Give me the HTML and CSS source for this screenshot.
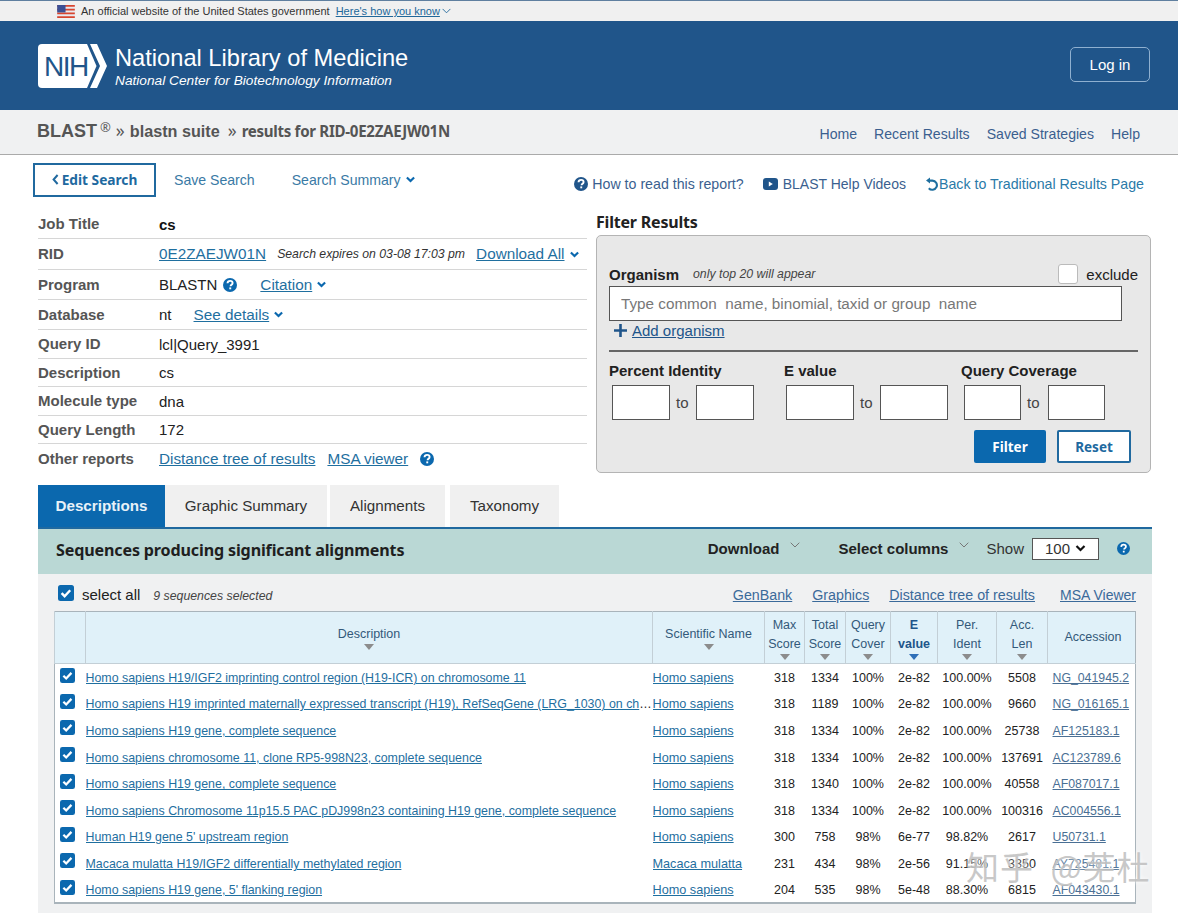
FILE: index.html
```html
<!DOCTYPE html>
<html lang="en">
<head>
<meta charset="utf-8">
<title>NCBI Blast</title>
<link rel="stylesheet" href="styles.css">
</head>
<body>
<svg class="defs" width="0" height="0" aria-hidden="true">
  <symbol id="help" viewBox="0 0 14 14"><circle cx="7" cy="7" r="7" fill="currentColor"/><path d="M4.5 5.3C4.6 3.7 5.7 2.9 7.1 2.9c1.5 0 2.5.9 2.5 2.1 0 1.1-.7 1.5-1.3 1.9-.5.3-.7.7-.7 1.3" fill="none" stroke="#fff" stroke-width="1.9"/><rect x="6.3" y="9.4" width="1.9" height="1.9" fill="#fff"/></symbol>
  <symbol id="chev" viewBox="0 0 10 7"><path d="M1 1.2l4 4 4-4" fill="none" stroke="currentColor" stroke-width="2.4"/></symbol>
  <symbol id="thin" viewBox="0 0 10 6"><path d="M.7.7L5 5 9.3.7" fill="none" stroke="currentColor" stroke-width="1"/></symbol>
  <symbol id="check" viewBox="0 0 16 16"><rect width="16" height="16" rx="2.5" fill="#0b68ae"/><path d="M3.6 8.2l3 3 5.6-6" fill="none" stroke="#fff" stroke-width="2.4"/></symbol>
  <symbol id="sort" viewBox="0 0 10 6"><path d="M0 0h10L5 6z" fill="currentColor"/></symbol>
</svg>

<div class="gov">
  <svg class="flag" viewBox="0 0 19 14" aria-hidden="true"><rect width="19" height="14" fill="#e9e9ef"/><path d="M0 0h19v2H0zM0 4h19v2H0zM0 8h19v2H0zM0 12h19v2H0z" fill="#d8452f"/><rect width="9" height="8" fill="#3c4f94"/></svg>
  <span>An official website of the United States government</span>
  <a class="gov-link" href="#">Here's how you know</a>
  <svg class="gov-chev"><use href="#thin"/></svg>
</div>

<header class="masthead">
  <div class="brand">
    <svg class="nih" viewBox="0 0 69 44" aria-hidden="true">
      <path d="M4 0H49L58.500 22 49 44H4a4 4 0 0 1-4-4V4a4 4 0 0 1 4-4z" fill="#fff"/>
      <path d="M52 0h7l10 22-10 22h-7l10-22z" fill="#fff"/>
      <text x="6" y="32" class="nih-text">NIH</text>
    </svg>
    <div class="brand-text">
      <div class="brand-main">National Library of Medicine</div>
      <div class="brand-sub">National Center for Biotechnology Information</div>
    </div>
  </div>
  <a class="login" href="#">Log in</a>
</header>

<nav class="crumbs">
  <div class="crumb-path"><b class="c1">BLAST</b><sup class="reg">®</sup><span class="raquo">»</span><b class="c2">blastn suite</b><span class="raquo">»</span><b class="c3">results for RID-0E2ZAEJW01N</b></div>
  <div class="crumb-links"><a href="#">Home</a><a href="#">Recent Results</a><a href="#">Saved Strategies</a><a href="#">Help</a></div>
</nav>

<div class="toolbar">
  <div class="tool-left">
    <a class="edit" href="#"><svg class="edit-chev" viewBox="0 0 7 11"><path d="M5.6 1L1.6 5.500l4 4.500" fill="none" stroke="currentColor" stroke-width="2"/></svg>Edit Search</a>
    <a class="tool-a" href="#">Save Search</a>
    <a class="tool-b" href="#">Search Summary<svg class="chev"><use href="#chev"/></svg></a>
  </div>
  <div class="tool-right">
    <a href="#" class="tr1"><svg class="help"><use href="#help"/></svg>How to read this report?</a>
    <a href="#" class="tr2"><svg class="yt" viewBox="0 0 15 12"><rect width="15" height="12" rx="3" fill="#20558a"/><path d="M5.8 3.400l4 2.600-4 2.600z" fill="#fff"/></svg>BLAST Help Videos</a>
    <a href="#" class="tr3"><svg class="undo" viewBox="0 0 14 14"><path d="M3.400 3.600h4a4.600 4.600 0 1 1-3.600 7.600" fill="none" stroke="#1f6f9f" stroke-width="2.100"/><path d="M1 3.600L5 .6v6z" fill="#1f6f9f"/></svg>Back to Traditional Results Page</a>
  </div>
</div>

<div class="summary">
  <dl class="job">
    <div class="job-row h29"><dt>Job Title</dt><dd class="strong">cs</dd></div>
    <div class="job-row h31"><dt>RID</dt><dd><a href="#">0E2ZAEJW01N</a><em class="exp">Search expires on 03-08 17:03 pm</em><a href="#">Download All</a><svg class="chev"><use href="#chev"/></svg></dd></div>
    <div class="job-row h30"><dt>Program</dt><dd>BLASTN<svg class="help after"><use href="#help"/></svg><a class="cit" href="#">Citation</a><svg class="chev"><use href="#chev"/></svg></dd></div>
    <div class="job-row h30"><dt>Database</dt><dd>nt<a class="see" href="#">See details</a><svg class="chev"><use href="#chev"/></svg></dd></div>
    <div class="job-row h29"><dt>Query ID</dt><dd>lcl|Query_3991</dd></div>
    <div class="job-row h28"><dt>Description</dt><dd>cs</dd></div>
    <div class="job-row h29"><dt>Molecule type</dt><dd>dna</dd></div>
    <div class="job-row h28"><dt>Query Length</dt><dd>172</dd></div>
    <div class="job-row h29 last"><dt>Other reports</dt><dd><a href="#">Distance tree of results</a><a class="msa" href="#">MSA viewer</a><svg class="help msa-h"><use href="#help"/></svg></dd></div>
  </dl>

  <section class="filter">
    <h2>Filter Results</h2>
    <div class="filter-box">
      <div class="org-head">
        <label class="org-label">Organism</label>
        <em class="org-note">only top 20 will appear</em>
        <span class="excl"><span class="excl-box"></span>exclude</span>
      </div>
      <input class="org-input" type="text" placeholder="Type common  name, binomial, taxid or group  name">
      <div class="add"><svg class="plus" viewBox="0 0 13 13"><path d="M6.500 0v13M0 6.500h13" stroke="#20558a" stroke-width="2.600"/></svg><a href="#">Add organism</a></div>
      <div class="ranges">
        <div class="range r1"><label>Percent Identity</label><div class="pair"><input class="w58"><span>to</span><input class="w58"></div></div>
        <div class="range r2"><label>E value</label><div class="pair"><input class="w68"><span>to</span><input class="w68"></div></div>
        <div class="range r3"><label>Query Coverage</label><div class="pair"><input class="w57"><span>to</span><input class="w57"></div></div>
      </div>
      <div class="actions"><button class="btn-filter">Filter</button><button class="btn-reset">Reset</button></div>
    </div>
  </section>
</div>

<div class="tabs">
  <a class="tab active t1" href="#">Descriptions</a>
  <a class="tab t2" href="#">Graphic Summary</a>
  <a class="tab t3" href="#">Alignments</a>
  <a class="tab t4" href="#">Taxonomy</a>
</div>

<section class="results">
  <div class="res-bar">
    <h3>Sequences producing significant alignments</h3>
    <div class="res-ctl">
      <b class="dl">Download</b><svg class="thin"><use href="#thin"/></svg>
      <b class="sel">Select columns</b><svg class="thin"><use href="#thin"/></svg>
      <span class="show">Show</span>
      <span class="select">100<svg class="sel-chev" viewBox="0 0 10 7"><path d="M1 1l4 4 4-4" fill="none" stroke="#111" stroke-width="2.200"/></svg></span>
      <svg class="help bar-h"><use href="#help"/></svg>
    </div>
  </div>
  <div class="res-tools">
    <div class="sel-all"><svg class="cb big"><use href="#check"/></svg><span class="sa">select all</span><em>9 sequences selected</em></div>
    <div class="res-links"><a href="#">GenBank</a><a href="#">Graphics</a><a href="#">Distance tree of results</a><a class="msa-link" href="#">MSA Viewer</a></div>
  </div>

  <table class="hits">
    <colgroup><col class="c-cb"><col class="c-desc"><col class="c-sci"><col class="c-max"><col class="c-tot"><col class="c-cov"><col class="c-e"><col class="c-per"><col class="c-len"><col class="c-acc"></colgroup>
    <thead>
      <tr>
        <th></th>
        <th>Description<svg class="sort"><use href="#sort"/></svg></th>
        <th>Scientific Name<svg class="sort"><use href="#sort"/></svg></th>
        <th>Max Score<svg class="sort"><use href="#sort"/></svg></th>
        <th>Total Score<svg class="sort"><use href="#sort"/></svg></th>
        <th>Query Cover<svg class="sort"><use href="#sort"/></svg></th>
        <th class="on">E value<svg class="sort"><use href="#sort"/></svg></th>
        <th>Per.<br>Ident<svg class="sort"><use href="#sort"/></svg></th>
        <th>Acc. Len<svg class="sort"><use href="#sort"/></svg></th>
        <th class="acc-h">Accession</th>
      </tr>
    </thead>
    <tbody>
      <tr><td><svg class="cb"><use href="#check"/></svg></td><td class="d"><a href="#">Homo sapiens H19/IGF2 imprinting control region (H19-ICR) on chromosome 11</a></td><td class="s"><a href="#">Homo sapiens</a></td><td>318</td><td>1334</td><td>100%</td><td>2e-82</td><td>100.00%</td><td>5508</td><td class="a"><a href="#">NG_041945.2</a></td></tr>
      <tr><td><svg class="cb"><use href="#check"/></svg></td><td class="d"><a href="#">Homo sapiens H19 imprinted maternally expressed transcript (H19), RefSeqGene (LRG_1030) on chromosome 11</a></td><td class="s"><a href="#">Homo sapiens</a></td><td>318</td><td>1189</td><td>100%</td><td>2e-82</td><td>100.00%</td><td>9660</td><td class="a"><a href="#">NG_016165.1</a></td></tr>
      <tr><td><svg class="cb"><use href="#check"/></svg></td><td class="d"><a href="#">Homo sapiens H19 gene, complete sequence</a></td><td class="s"><a href="#">Homo sapiens</a></td><td>318</td><td>1334</td><td>100%</td><td>2e-82</td><td>100.00%</td><td>25738</td><td class="a"><a href="#">AF125183.1</a></td></tr>
      <tr><td><svg class="cb"><use href="#check"/></svg></td><td class="d"><a href="#">Homo sapiens chromosome 11, clone RP5-998N23, complete sequence</a></td><td class="s"><a href="#">Homo sapiens</a></td><td>318</td><td>1334</td><td>100%</td><td>2e-82</td><td>100.00%</td><td>137691</td><td class="a"><a href="#">AC123789.6</a></td></tr>
      <tr><td><svg class="cb"><use href="#check"/></svg></td><td class="d"><a href="#">Homo sapiens H19 gene, complete sequence</a></td><td class="s"><a href="#">Homo sapiens</a></td><td>318</td><td>1340</td><td>100%</td><td>2e-82</td><td>100.00%</td><td>40558</td><td class="a"><a href="#">AF087017.1</a></td></tr>
      <tr><td><svg class="cb"><use href="#check"/></svg></td><td class="d"><a href="#">Homo sapiens Chromosome 11p15.5 PAC pDJ998n23 containing H19 gene, complete sequence</a></td><td class="s"><a href="#">Homo sapiens</a></td><td>318</td><td>1334</td><td>100%</td><td>2e-82</td><td>100.00%</td><td>100316</td><td class="a"><a href="#">AC004556.1</a></td></tr>
      <tr><td><svg class="cb"><use href="#check"/></svg></td><td class="d"><a href="#">Human H19 gene 5' upstream region</a></td><td class="s"><a href="#">Homo sapiens</a></td><td>300</td><td>758</td><td>98%</td><td>6e-77</td><td>98.82%</td><td>2617</td><td class="a"><a href="#">U50731.1</a></td></tr>
      <tr><td><svg class="cb"><use href="#check"/></svg></td><td class="d"><a href="#">Macaca mulatta H19/IGF2 differentially methylated region</a></td><td class="s"><a href="#">Macaca mulatta</a></td><td>231</td><td>434</td><td>98%</td><td>2e-56</td><td>91.15%</td><td>3350</td><td class="a"><a href="#">AY725481.1</a></td></tr>
      <tr><td><svg class="cb"><use href="#check"/></svg></td><td class="d"><a href="#">Homo sapiens H19 gene, 5' flanking region</a></td><td class="s"><a href="#">Homo sapiens</a></td><td>204</td><td>535</td><td>98%</td><td>5e-48</td><td>88.30%</td><td>6815</td><td class="a"><a href="#">AF043430.1</a></td></tr>
    </tbody>
  </table>
</section>

<div class="watermark">知乎 @芜杜</div>
</body>
</html>
```
FILE: styles.css
```css
* { box-sizing: border-box; }
html, body { margin: 0; padding: 0; }
body { width: 1178px; height: 913px; overflow: hidden; position: relative; font-family: "Liberation Sans", Arial, sans-serif; background: #fff; color: #212121; font-size: 14px; }
a { color: #1f6f9f; }
.defs { position: absolute; }

.gov { height: 21px; background: #f0f0f0; border-top: 1px solid #5f7f9f; display: flex; align-items: center; padding-left: 57px; font-size: 11px; color: #333; }
.flag { width: 18px; height: 13px; margin-right: 6px; }
.gov-link { margin-left: 6px; color: #20679a; }
.gov-chev { width: 9px; height: 6px; margin-left: 2px; color: #20679a; }

.masthead { height: 89px; background: #20558a; display: flex; align-items: center; justify-content: space-between; padding: 0 28px 0 38px; }
.brand { display: flex; align-items: center; gap: 8px; }
.nih { width: 69px; height: 44px; }
.nih-text { font-family: "Liberation Sans", Arial, sans-serif; font-size: 28px; fill: #20558a; letter-spacing: -1.5px; }
.brand-text { padding-top: 2px; }
.brand-main { font-size: 23.66px; color: #fff; line-height: 27px; }
.brand-sub { font-size: 13.7px; font-style: italic; color: #fff; line-height: 17px; }
.login { width: 80px; height: 35px; margin-top: -2px; border: 1px solid #8fb0d0; border-radius: 5px; color: #fff; font-size: 15px; display: flex; align-items: center; justify-content: center; text-decoration: none; }

.crumbs { height: 45px; background: #f0f1f2; border-bottom: 1px solid #aaa; display: flex; justify-content: space-between; padding: 0 38px 0 37px; color: #555; }
.crumb-path { display: flex; align-items: baseline; padding-top: 8px; font-family: "Open Sans", sans-serif; }
.c1 { font-size: 18px; font-family: "Liberation Sans", sans-serif; }
.reg { font-size: 13px; align-self: flex-start; margin: 0 0 0 3px; font-weight: 400; }
.raquo { margin: 0 5px; font-size: 18px; }
.c2 { font-size: 16.2px; font-family: "Liberation Sans", sans-serif; margin-right: 3px; }
.c3 { font-size: 15.1px; font-family: "Noto Sans", sans-serif; letter-spacing: -.3px; }
.crumb-links { display: flex; gap: 17px; padding-top: 16px; font-size: 14.1px; }
.crumb-links a { color: #3b5f8f; text-decoration: none; }

.toolbar { display: flex; justify-content: space-between; padding: 8px 34px 0 33px; height: 55px; }
.tool-left { display: flex; align-items: flex-start; }
.edit { width: 123px; height: 34px; padding-bottom: 2px; border: 2px solid #20699f; display: flex; align-items: center; justify-content: center; font-family: "Noto Sans", sans-serif; font-weight: 700; font-size: 13.7px; color: #20699f; text-decoration: none; }
.edit-chev { width: 7px; height: 11px; margin-right: 3px; }
.tool-a, .tool-b { margin-top: 9px; color: #3a7aa5; text-decoration: none; font-size: 14.1px; }
.tool-a { margin-left: 18px; }
.tool-b { margin-left: 37px; }
.chev { width: 9px; height: 7px; margin-left: 5px; color: #0b68ae; vertical-align: 2px; }
.tool-right { display: flex; align-items: flex-start; padding-top: 13px; font-size: 14.2px; gap: 19px; }
.tool-right a { display: flex; align-items: center; text-decoration: none; color: #3b5f8f; }
.tool-right .tr2 { font-size: 14px; }
.tool-right .tr3 { color: #2a7aa8; }
.help { width: 14px; height: 14px; color: #0b68ae; }
.tool-right .help { margin-right: 4px; color: #20558a; }
.yt { width: 15px; height: 12px; margin-right: 5px; }
.undo { width: 14px; height: 14px; }

.summary { display: flex; padding: 0 27px 0 38px; gap: 9px; height: 275px; }
.job { margin: 0; width: 549px; padding-top: 0; }
.job-row { display: flex; align-items: center; border-bottom: 1px solid #d6d6d6; }
.job-row.last { border-bottom: 0; }
.h28 { height: 28px; } .h29 { height: 29px; } .h30 { height: 30px; } .h31 { height: 31px; }
.job dt { width: 121px; font-weight: 700; color: #555; font-size: 15px; padding-bottom: 1px; }
.job dd { margin: 0; font-size: 15px; color: #212121; display: flex; align-items: center; }
.job dd a { font-size: 15.3px; }
.job .strong { font-weight: 700; color: #111; }
.exp { font-size: 12.25px; margin: 0 11px; color: #333; }
.help.after { margin-left: 6px; }
.cit { margin-left: 23px; }
.see { margin-left: 22px; }
.job dd a.msa { margin-left: 12px; }
.msa-h { margin-left: 12px; }

.filter { width: 555px; padding-top: 1px; }
.filter h2 { margin: 0 0 2px; font-family: "Noto Sans", sans-serif; font-size: 16px; line-height: 22px; font-weight: 700; letter-spacing: -.2px; color: #212121; }
.filter-box { height: 238px; background: #e8e8e8; border: 1px solid #b4b4b4; border-radius: 5px; padding: 27px 12px 0 12px; }
.org-head { display: flex; align-items: center; height: 22px; }
.org-label { font-weight: 700; font-size: 15px; }
.org-note { font-size: 12.3px; margin-left: 14px; color: #444; }
.excl { margin-left: auto; display: flex; align-items: center; font-size: 15px; }
.excl-box { width: 20px; height: 20px; background: #fff; border: 1px solid #bbb; border-radius: 3px; margin-right: 8px; }
.org-input { display: block; width: 513px; height: 35px; margin-top: 1px; background: #fff; border: 1px solid #555; padding: 0 11px; font: 15.25px "Liberation Sans", sans-serif; white-space: pre; }
.org-input::placeholder { color: #777; }
.add { display: flex; align-items: center; height: 18px; padding-left: 5px; font-size: 15px; }
.add a { color: #20558a; }
.plus { width: 13px; height: 13px; margin-right: 5px; }
.ranges { display: flex; margin-top: 11px; border-top: 2px solid #666; width: 529px; padding-top: 10px; }
.range label { display: block; font-weight: 700; font-size: 15px; height: 23px; }
.r1 { width: 175px; } .r2 { width: 177px; } .r3 { width: 177px; }
.pair { display: flex; align-items: center; padding-left: 3px; font-size: 15px; color: #444; }
.pair span { margin: 0 6px; width: 14px; }
.pair input { height: 35px; background: #fff; border: 1px solid #555; padding: 0; }
.w58 { width: 58px; } .w68 { width: 68px; } .w57 { width: 57px; }
.r2 .pair { padding-left: 2px; } .r3 .pair { padding-left: 3px; }
.r3 .pair span { margin-right: 7px; }
.actions { display: flex; justify-content: flex-end; gap: 11px; margin-top: 10px; padding-right: 7px; }
.actions button { height: 33px; font-family: "Noto Sans", sans-serif; font-weight: 700; font-size: 13.5px; border-radius: 2px; }
.btn-filter { width: 72px; background: #0b68ae; color: #fff; border: 0; }
.btn-reset { width: 74px; background: #fff; color: #20699f; border: 2px solid #20699f; }

.tabs { display: flex; padding-left: 38px; height: 42px; }
.tab { display: flex; align-items: center; justify-content: center; background: #f0f0f0; color: #333; text-decoration: none; font-size: 15.2px; padding-bottom: 1px; }
.tab.active { background: #0b68ae; color: #e8f1f8; font-weight: 700; }
.t1 { width: 127px; } .t2 { width: 162px; margin-right: 3px; } .t3 { width: 115px; margin-right: 5px; } .t4 { width: 109px; }

.results { margin: 0 26px 0 38px; background: #f0f1f2; border-top: 2px solid #20699f; height: 386px; }
.res-bar { height: 45px; background: #bad8d5; display: flex; align-items: center; justify-content: space-between; padding: 0 22px 0 18px; }
.res-bar h3 { margin: 0 0 3px; font-family: "Noto Sans", sans-serif; font-size: 16.1px; font-weight: 700; color: #1f1f1f; letter-spacing: -.15px; }
.res-ctl { display: flex; align-items: center; font-size: 15px; color: #333; margin-bottom: 6px; }
.thin { width: 10px; height: 6px; color: #777; margin: -8px 0 0 11px; }
.sel { margin-left: 38px; }
.dl, .sel { color: #222; }
.show { margin-left: 17px; }
.select { width: 67px; height: 22px; margin-left: 8px; background: #fff; border: 1px solid #555; display: flex; align-items: center; padding-left: 12px; }
.sel-chev { width: 11px; height: 7px; margin-left: 5px; }
.bar-h { width: 13px; height: 13px; margin-left: 18px; }

.res-tools { height: 37px; display: flex; justify-content: space-between; padding: 3px 16px 0 20px; }
.sel-all { display: flex; align-items: center; }
.cb { width: 15px; height: 15px; display: block; }
.cb.big { width: 16px; height: 16px; margin-top: -2px; }
.sa { margin-left: 8px; font-size: 15px; }
.sel-all em { margin: 3px 0 0 13px; font-size: 12.3px; color: #444; }
.res-links { display: flex; align-items: center; gap: 20px; font-size: 14.25px; padding-top: 1px; }
.res-links a { color: #3b6a9a; }
.res-links .msa-link { margin-left: 5px; font-size: 14px; }

.hits { width: 1081px; margin-left: 16px; table-layout: fixed; border-collapse: collapse; background: #fff; border: 1px solid #a9b4bb; border-bottom: 2px solid #a9b4bb; font-size: 12.5px; }
.c-cb { width: 31px; } .c-desc { width: 567px; } .c-sci { width: 112px; } .c-max { width: 40px; } .c-tot { width: 41px; } .c-cov { width: 45px; } .c-e { width: 47px; } .c-per { width: 59px; } .c-len { width: 51px; } .c-acc { width: 88px; }
.hits thead tr { height: 52px; background: #e0f1f9; }
.hits th { font-weight: 400; color: #33597a; border-left: 1px solid #c3cfd6; border-bottom: 1px solid #c3cfd6; padding: 0 2px; line-height: 19px; vertical-align: middle; }
.hits th.on { font-weight: 700; color: #20558a; }
.hits th.acc-h { padding-left: 5px; }
.sort { display: block; width: 10px; height: 6px; margin: 0 auto; color: #8c8c8c; }
.on .sort { color: #2f6fb8; }
.hits td { height: 26.6px; padding: 2px 0 0; text-align: center; white-space: nowrap; color: #222; }
.hits td.d, .hits td.s, .hits td.a { text-align: left; overflow: hidden; text-overflow: ellipsis; }
.hits td.d { font-size: 12.4px; }
.hits td.s { font-size: 12.7px; }
.hits td.a { padding-left: 5px; font-size: 12.3px; }
.hits td a { color: #1f6f9f; }
.hits td.a a { color: #4a6f94; }
.hits td:first-child .cb { margin: -6px 0 0 5px; }

.watermark { position: absolute; left: 966px; top: 842px; font-family: "Noto Sans CJK SC", sans-serif; font-size: 33px; letter-spacing: 1px; word-spacing: 8px; color: rgba(190,190,190,.85); text-shadow: 0 0 4px rgba(255,255,255,.9); white-space: nowrap; }
```
